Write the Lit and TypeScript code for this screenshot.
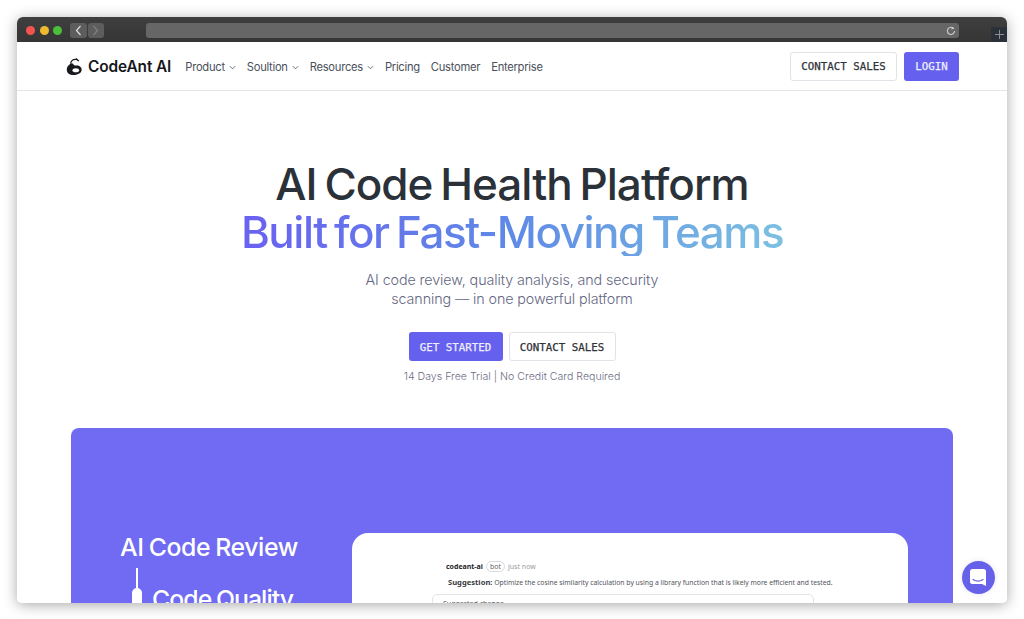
import { LitElement, html, css } from "lit";
import { customElement } from "lit/decorators.js";

const chevron = html`<svg class="chev" viewBox="0 0 8 5" width="7" height="5"><path d="M1 1l3 3 3-3" fill="none" stroke="#555b66" stroke-width="1"/></svg>`;

@customElement("app-root")
export class AppRoot extends LitElement {
  static styles = css`
    :host {
      display: block;
      width: 1024px;
      height: 619px;
      box-sizing: border-box;
      padding: 17px 17px 16px;
      background: #fff;
      font-family: Inter, "Noto Sans", sans-serif;
      overflow: hidden;
    }
    .window {
      position: relative;
      height: 586px;
      border-radius: 6px 6px 5px 5px;
      overflow: hidden;
      background: #fff;
      display: flex;
      flex-direction: column;
    }
    .frame {
      border-radius: 6px 6px 5px 5px;
      box-shadow: 0 2px 14px rgba(0, 0, 0, 0.34);
    }
    .toolbar {
      height: 25px;
      flex: none;
      background: linear-gradient(#3f3f3f, #353535);
      display: flex;
      align-items: flex-start;
      padding: 6px 0 0 9px;
      box-sizing: border-box;
    }
    .lights { display: flex; gap: 4.5px; margin-top: 3px; }
    .light { width: 9px; height: 9px; border-radius: 50%; }
    .red { background: #f4544f; }
    .yellow { background: #edb92e; }
    .green { background: #4cbf3a; }
    .navs { display: flex; gap: 1px; margin-left: 8px; }
    .navbtn {
      width: 16.5px; height: 15px; background: #5d5d5d; border-radius: 3px;
      display: flex; align-items: center; justify-content: center;
    }
    .url {
      margin-left: 42px;
      width: 813px;
      height: 15px;
      background: #666;
      border-radius: 3px;
      display: flex;
      align-items: center;
      justify-content: flex-end;
      padding-right: 3px;
      box-sizing: border-box;
    }
    .plus {
      margin-left: auto;
      width: 16px; height: 15px; margin-top: 4px;
      background: #2b3139;
      display: flex; align-items: center; justify-content: center;
    }
    .nav {
      height: 49px;
      flex: none;
      border-bottom: 1px solid #e4e5e8;
      box-sizing: border-box;
      display: flex;
      align-items: center;
      padding: 0 48px 0 49px;
    }
    .logo { display: flex; align-items: center; gap: 5px; padding-top: 1px; }
    .brand { font-size: 15.4px; font-weight: 600; color: #15171c; letter-spacing: -0.1px; }
    .links { display: flex; align-items: center; gap: 11px; margin-left: 14px; padding-top: 2px; font-size: 11.2px; letter-spacing: -0.27px; color: #4a4f5a; }
    .link { display: flex; align-items: center; gap: 4px; }
    .spacer { flex: 1; }
    .btn {
      height: 29px;
      box-sizing: border-box;
      padding-top: 1px;
      border-radius: 3px;
      display: inline-flex;
      align-items: center;
      justify-content: center;
      font-family: "DejaVu Sans Mono", monospace;
      font-size: 10.8px;
      -webkit-text-stroke: 0.25px currentColor;
    }
    .outline { background: #fff; border: 1px solid #e2e3e8; color: #2f3238; width: 107px; }
    .solid { background: #6560ee; color: #eeeeff; }
    .login { width: 55px; margin-left: 7px; }
    .start { width: 94px; }
    .hero { display: flex; flex-direction: column; align-items: center; padding-top: 69px; }
    h1 {
      margin: 0;
      font-size: 44px;
      line-height: 48px;
      font-weight: 550;
      letter-spacing: -0.96px;
      word-spacing: -3px;
      text-align: center;
      color: #2a3138;
    }
    .grad {
      display: block;
      width: max-content;
      margin: 0 auto;
      letter-spacing: -1.47px;
      background: linear-gradient(90deg, #6a61f0 0%, #5f8ae6 50%, #7cc0e0 100%);
      -webkit-background-clip: text;
      background-clip: text;
      color: transparent;
    }
    .sub {
      margin: 14px 0 0;
      font-size: 14.3px;
      line-height: 19px;
      font-weight: 300;
      text-align: center;
      color: #64667f;
      letter-spacing: -0.1px;
    }
    .cta { display: flex; gap: 6px; margin-top: 24px; }
    .note { margin-top: 9px; font-size: 10.6px; line-height: 14px; font-weight: 300; color: #6c6e85; }
    .panel {
      margin: 44px 54px 0;
      flex: 1;
      background: #706bf2;
      border-radius: 8px 8px 0 0;
      display: flex;
      gap: 54px;
      padding: 105px 45px 0 49px;
      min-height: 0;
    }
    .tabs { width: 178px; color: #fff; font-size: 24.8px; font-weight: 500; letter-spacing: -0.42px; word-spacing: -1px; flex: none; }
    .tab-first { line-height: 28px; white-space: nowrap; }
    .tab-row { display: flex; margin-top: 7px; margin-left: 12px; }
    .track { width: 10px; display: flex; flex-direction: column; align-items: center; flex: none; }
    .stem { width: 2px; height: 20px; background: #fff; }
    .pill { width: 10px; height: 30px; background: #fff; border-radius: 5px; }
    .tab-second { margin-left: 10px; margin-top: 17px; line-height: 28px; white-space: nowrap; letter-spacing: -0.95px; }
    .card {
      flex: 1;
      background: #fff;
      border-radius: 16px 16px 0 0;
      padding: 28px 94px 0 94px;
      color: #333;
      font-family: "Noto Sans", sans-serif;
      overflow: hidden;
    }
    .meta { display: flex; align-items: center; font-size: 7px; line-height: 10px; gap: 3px; color: #9a9aa2; }
    .meta b { color: #24262b; }
    .badge { border: 1px solid #d9dadf; border-radius: 6px; padding: 0 3px; line-height: 9px; color: #666; }
    .sugg { margin: 5px 0 0 2px; font-size: 6.8px; line-height: 10px; color: #50525a; white-space: nowrap; }
    .sugg b { font-size: 7.6px; color: #383a40; }
    .box {
      margin: 6px 0 0 -14px;
      width: 382px;
      height: 40px;
      border: 1px solid #e3e4ea;
      border-radius: 5px;
      box-sizing: border-box;
      padding: 4px 10px;
      font-size: 7px;
      color: #555;
    }
    .chat {
      position: absolute;
      left: 944.5px;
      top: 543.5px;
      width: 33px;
      height: 33px;
      border-radius: 50%;
      background: #6761ea;
      box-shadow: 0 0 5px rgba(100, 100, 200, 0.18);
      display: flex;
      align-items: center;
      justify-content: center;
    }
  `;

  render() {
    return html`
      <div class="frame">
        <div class="window">
          <div class="toolbar">
            <div class="lights"><span class="light red"></span><span class="light yellow"></span><span class="light green"></span></div>
            <div class="navs">
              <div class="navbtn"><svg width="7" height="11" viewBox="0 0 7 11"><path d="M5.5 1L1.5 5.5l4 4.5" fill="none" stroke="#ddd" stroke-width="1.2"/></svg></div>
              <div class="navbtn"><svg width="7" height="11" viewBox="0 0 7 11"><path d="M1.5 1l4 4.5-4 4.5" fill="none" stroke="#808080" stroke-width="1.2"/></svg></div>
            </div>
            <div class="url"><svg width="10" height="10" viewBox="0 0 10 10"><path d="M7.8 2.6A3.6 3.6 0 1 0 8.6 5" fill="none" stroke="#ccc" stroke-width="1.1"/><path d="M5.8 0.4l2.6 2.2-3 .9z" fill="#ccc"/></svg></div>
            <div class="plus"><svg width="9" height="9" viewBox="0 0 9 9"><path d="M4.5 0v9M0 4.5h9" stroke="#8a9099" stroke-width="1"/></svg></div>
          </div>
          <header class="nav">
            <div class="logo">
              <svg width="17" height="18" viewBox="0 0 17 18">
                <path d="M10 1.4C7.4 1 4.8 2.6 4.6 5.6" fill="none" stroke="#17191d" stroke-width="1.2"/>
                <path d="M9.8 .6l3 2.4" fill="none" stroke="#17191d" stroke-width="1.4"/>
                <path d="M5.2 5.2C2.2 6.8.4 9.4.8 12.4c.4 3 3 4.8 6.6 4.6 4-.2 7.6-1.6 8.2-4.6.5-2.8-2-5-5.4-4.8C8.6 7.7 7.4 7 6.8 5.6z" fill="#17191d"/>
                <ellipse cx="9.8" cy="12.2" rx="3.3" ry="2" fill="#fff"/>
              </svg>
              <span class="brand">CodeAnt AI</span>
            </div>
            <nav class="links">
              <span class="link">Product ${chevron}</span>
              <span class="link">Soultion ${chevron}</span>
              <span class="link">Resources ${chevron}</span>
              <span class="link">Pricing</span>
              <span class="link">Customer</span>
              <span class="link">Enterprise</span>
            </nav>
            <div class="spacer"></div>
            <span class="btn outline">CONTACT SALES</span>
            <span class="btn solid login">LOGIN</span>
          </header>
          <section class="hero">
            <h1>AI Code Health Platform<span class="grad">Built for Fast-Moving Teams</span></h1>
            <p class="sub">AI code review, quality analysis, and security<br />scanning — in one powerful platform</p>
            <div class="cta">
              <span class="btn solid start">GET STARTED</span>
              <span class="btn outline">CONTACT SALES</span>
            </div>
            <div class="note">14 Days Free Trial | No Credit Card Required</div>
          </section>
          <section class="panel">
            <div class="tabs">
              <div class="tab-first">AI Code Review</div>
              <div class="tab-row">
                <div class="track"><span class="stem"></span><span class="pill"></span></div>
                <div class="tab-second">Code Quality</div>
              </div>
            </div>
            <div class="card">
              <div class="meta"><b>codeant-ai</b><span class="badge">bot</span><span>just now</span></div>
              <p class="sugg"><b>Suggestion:</b> Optimize the cosine similarity calculation by using a library function that is likely more efficient and tested.</p>
              <div class="box">Suggested change</div>
            </div>
          </section>
          <div class="chat">
            <svg width="16" height="17" viewBox="0 0 16 17">
              <path d="M2.5 0h11A2.5 2.5 0 0 1 16 2.5V17l-4-2H2.5A2.5 2.5 0 0 1 0 12.5v-10A2.5 2.5 0 0 1 2.5 0z" fill="#fff"/>
              <path d="M3 10.5c3 2 7 2 10 0" fill="none" stroke="#6761ea" stroke-width="1.2" stroke-linecap="round"/>
            </svg>
          </div>
        </div>
      </div>
    `;
  }
}
